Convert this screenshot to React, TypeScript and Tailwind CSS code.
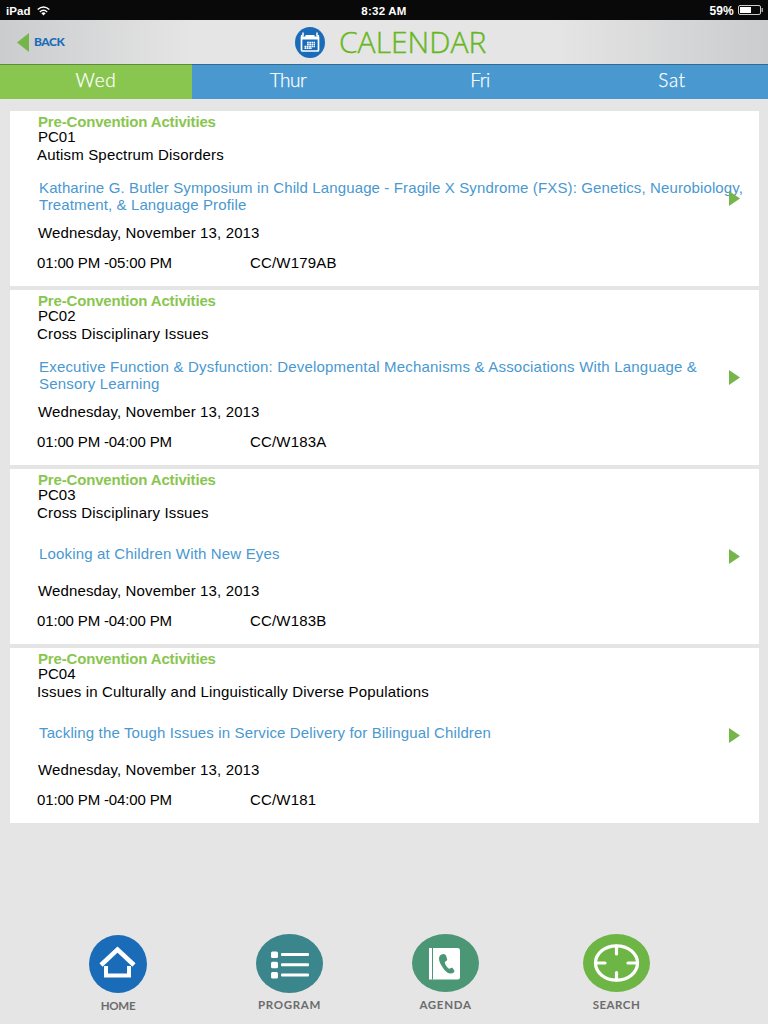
import type { ReactNode } from 'react';

interface Session {
  code: string;
  topic: string;
  title: string;
  titleClass: string;
  time: string;
  room: string;
}

interface NavItem {
  label: string;
  itemClass: string;
  labelClass: string;
  icon: ReactNode;
}

const days = [
  { name: 'Wed', textClass: 'tracking-[0.7px]' },
  { name: 'Thur', textClass: 'tracking-[-0.5px]' },
  { name: 'Fri', textClass: 'tracking-[-0.4px]' },
  { name: 'Sat', textClass: 'tracking-[0.6px]' },
];

const sessions: Session[] = [
  {
    code: 'PC01',
    topic: 'Autism Spectrum Disorders',
    title:
      'Katharine G. Butler Symposium in Child Language - Fragile X Syndrome (FXS): Genetics, Neurobiology,\nTreatment, & Language Profile',
    titleClass: 'tracking-[0.125px]',
    time: '01:00 PM -05:00 PM',
    room: 'CC/W179AB',
  },
  {
    code: 'PC02',
    topic: 'Cross Disciplinary Issues',
    title:
      'Executive Function & Dysfunction: Developmental Mechanisms & Associations With Language &\nSensory Learning',
    titleClass: 'tracking-[0.19px]',
    time: '01:00 PM -04:00 PM',
    room: 'CC/W183A',
  },
  {
    code: 'PC03',
    topic: 'Cross Disciplinary Issues',
    title: 'Looking at Children With New Eyes',
    titleClass: 'tracking-[0.17px]',
    time: '01:00 PM -04:00 PM',
    room: 'CC/W183B',
  },
  {
    code: 'PC04',
    topic: 'Issues in Culturally and Linguistically Diverse Populations',
    title: 'Tackling the Tough Issues in Service Delivery for Bilingual Children',
    titleClass: 'tracking-[0.14px]',
    time: '01:00 PM -04:00 PM',
    room: 'CC/W181',
  },
];

function HomeIcon() {
  return (
    <svg width="58" height="58" viewBox="0 0 58 58" fill="none">
      <circle cx="29" cy="29" r="29" fill="#1b6cb8" />
      <path d="M12 30 28.5 14.5 45 30" stroke="#fff" strokeWidth="4.5" />
      <path d="M17 31V40.500H40V31" stroke="#fff" strokeWidth="4" />
    </svg>
  );
}

function ProgramIcon() {
  return (
    <svg width="67" height="59" viewBox="0 0 67 59">
      <ellipse cx="33.5" cy="29.5" rx="33.5" ry="29.5" fill="#3a868c" />
      <g fill="#fff">
        <rect x="15" y="17.5" width="7" height="6.5" rx="1.5" />
        <rect x="15" y="27.8" width="7" height="6.5" rx="1.5" />
        <rect x="15" y="38" width="7" height="6.5" rx="1.5" />
        <rect x="25" y="19" width="28" height="3" rx="1" />
        <rect x="25" y="29.2" width="28" height="3" rx="1" />
        <rect x="25" y="39.5" width="28" height="3" rx="1" />
      </g>
    </svg>
  );
}

function AgendaIcon() {
  return (
    <svg width="67" height="58" viewBox="0 0 67 58">
      <ellipse cx="33.5" cy="29" rx="33.5" ry="29" fill="#4a9675" />
      <path d="M17 14H45.5Q48 14 48 16.5V43Q48 45.500 45.500 45.500H17Z" fill="#fff" />
      <path d="M20.500 14V45.500" stroke="#4a9675" strokeWidth="1" />
      <path
        d="M29.500 20.500C26 22 26.500 27 29.500 31.500C32 36 35.500 40 39 39.500C41.500 39.300 42.500 38 42.500 37L40.500 33.800Q39.500 33.300 37.500 34.800Q36.500 35 35 33Q32.800 30 32.800 28.500Q33 27.500 34 27Q35.400 26.500 35.200 25.500L34 21.500Q33 19.800 31.500 20Z"
        fill="#4a9675"
      />
    </svg>
  );
}

function SearchIcon() {
  return (
    <svg width="67" height="58" viewBox="0 0 67 58" fill="none">
      <ellipse cx="33.5" cy="29" rx="33.5" ry="29" fill="#6db544" />
      <ellipse cx="33.500" cy="29" rx="21" ry="17.200" stroke="#fff" strokeWidth="3.300" />
      <path
        d="M33.500 12V20M33.500 46V38.500M12.500 29H22M54.500 29H45"
        stroke="#fff"
        strokeWidth="3.200"
        strokeLinecap="round"
      />
    </svg>
  );
}

const navItems: NavItem[] = [
  { label: 'HOME', itemClass: 'ml-[89px] w-[58px] pt-px', labelClass: 'mt-[7px] tracking-[-0.3px]', icon: <HomeIcon /> },
  { label: 'PROGRAM', itemClass: 'ml-[109px] w-[67px]', labelClass: 'mt-[6px] tracking-[0.7px]', icon: <ProgramIcon /> },
  { label: 'AGENDA', itemClass: 'ml-[89px] w-[67px]', labelClass: 'mt-[7px] tracking-[0.7px]', icon: <AgendaIcon /> },
  { label: 'SEARCH', itemClass: 'ml-[104px] w-[67px]', labelClass: 'mt-[7px] tracking-[0.5px]', icon: <SearchIcon /> },
];

function StatusBar() {
  return (
    <div className="grid h-5 grid-cols-3 items-center bg-[#090909] px-1.5 pt-[3px] text-[11.5px] leading-none font-bold tracking-[0.1px] text-white">
      <div className="flex items-center gap-1.5">
        <span>iPad</span>
        <svg width="13" height="10" viewBox="0 0 13 10" fill="none" className="-mt-0.5">
          <path d="M.7 3.600Q6.500-1.600 12.300 3.600M2.800 5.900Q6.500 2.600 10.200 5.900" stroke="#fff" strokeWidth="1.400" />
          <path d="M4.400 7.200Q6.500 5.500 8.600 7.200L6.500 9.500Z" fill="#fff" />
        </svg>
      </div>
      <span className="text-center tracking-[0.25px]">8:32 AM</span>
      <div className="-mr-1.5 flex items-center justify-end gap-1 pr-[5px]">
        <span className="-mt-px text-[12px] tracking-[0.2px]">59%</span>
        <svg width="25" height="10" viewBox="0 0 25 10" fill="none" className="-mt-[3px]">
          <rect x=".5" y=".5" width="22" height="9" rx="1.500" stroke="#ccc" />
          <rect x="2" y="2" width="11" height="6" fill="#fff" />
          <path d="M24.200 3V7" stroke="#ccc" strokeWidth="1.200" />
        </svg>
      </div>
    </div>
  );
}

function Header() {
  return (
    <header className="grid h-11 grid-cols-[295px_1fr] items-center bg-linear-to-r from-[#cbccce] via-[#e5e5e5] via-25% to-[#e5e5e5]">
      <button className="flex items-center gap-[5px] pl-[17px]">
        <svg width="12" height="19" viewBox="0 0 12 19">
          <path d="M12 0V19L0 9.500Z" fill="#76b549" />
        </svg>
        <span className="font-['Lato'] text-[12px] leading-none font-black tracking-[-0.5px] text-[#1b6cb8]">
          BACK
        </span>
      </button>
      <div className="flex h-full items-center bg-linear-to-r from-[#e5e5e5] from-55% to-[#cbccce]">
        <svg width="30" height="31" viewBox="0 0 30 31">
          <ellipse cx="15" cy="15.500" rx="15" ry="15.500" fill="#1b6cb8" />
          <rect x="6.500" y="9" width="17" height="15" rx="1" fill="none" stroke="#fff" strokeWidth="1.700" />
          <path d="M6 8H24V12.500H6Z" fill="#fff" />
          <path d="M9 5.500V9.500M21 5.500V9.500" stroke="#1b6cb8" strokeWidth="3" />
          <path d="M8 5.500V9.500M22 5.500V9.500" stroke="#fff" strokeWidth="1.500" />
          <path
            d="M12 15.500H20M12 17.500H20M9.500 19.500H20M9.500 21.300H17"
            stroke="#fff"
            strokeWidth="1.500"
            strokeDasharray="1.800 .5"
          />
        </svg>
        <h1 className="-mt-px ml-[14px] font-['Open_Sans'] text-[30px] leading-none font-light text-[#65b821] [-webkit-text-stroke:0.4px_#65b821]">
          CALENDAR
        </h1>
      </div>
    </header>
  );
}

function SessionCard({ session }: { session: Session }) {
  return (
    <article className="relative h-[175px] bg-white pl-[27px] text-[15px] leading-none tracking-[0.17px] text-black">
      <p className="ml-px pt-[3px] leading-4 font-bold tracking-[-0.17px] text-[#89c650]">
        Pre-Convention Activities
      </p>
      <p className="ml-px leading-[14px] tracking-normal">{session.code}</p>
      <p className="pt-px leading-5">{session.topic}</p>
      <h2
        className={`ml-0.5 flex h-[61px] items-center leading-[17px] whitespace-pre text-[#4998d0] ${session.titleClass}`}
      >
        {session.title}
      </h2>
      <p className="ml-px pt-px leading-3 tracking-[0.13px]">Wednesday, November 13, 2013</p>
      <div className="mt-[15px] flex leading-[18px]">
        <span className="w-[213px] tracking-[-0.15px]">{session.time}</span>
        <span>{session.room}</span>
      </div>
      <svg width="11" height="15" viewBox="0 0 11 15" className="absolute top-[80px] right-[19px]">
        <path d="M0 0V15L11 7.500Z" fill="#76b549" />
      </svg>
    </article>
  );
}

export default function App() {
  return (
    <div className="flex h-[1024px] w-[768px] flex-col overflow-hidden bg-[#e5e5e5] font-['Liberation_Sans',sans-serif]">
      <StatusBar />
      <Header />
      <nav className="grid h-[35px] grid-cols-4 bg-[#4998d0]">
        {days.map((day) => (
          <button
            key={day.name}
            className={`border-t border-black/30 pb-[6px] font-['Lato'] text-[19px] leading-none font-light text-white [-webkit-text-stroke:0.25px_white] ${day.textClass} ${
              day.name === 'Wed' ? 'bg-[#89c650]' : 'bg-[#4998d0]'
            }`}
          >
            {day.name}
          </button>
        ))}
      </nav>
      <main className="flex flex-1 flex-col gap-1 pt-3 pr-[9px] pl-[10px]">
        {sessions.map((session) => (
          <SessionCard key={session.code} session={session} />
        ))}
      </main>
      <footer className="flex h-[90px]">
        {navItems.map((item) => (
          <button key={item.label} className={`flex flex-col items-center ${item.itemClass}`}>
            {item.icon}
            <span className={`font-['Lato'] text-[11.5px] leading-3 font-bold text-[#6c6c6c] ${item.labelClass}`}>
              {item.label}
            </span>
          </button>
        ))}
      </footer>
    </div>
  );
}
